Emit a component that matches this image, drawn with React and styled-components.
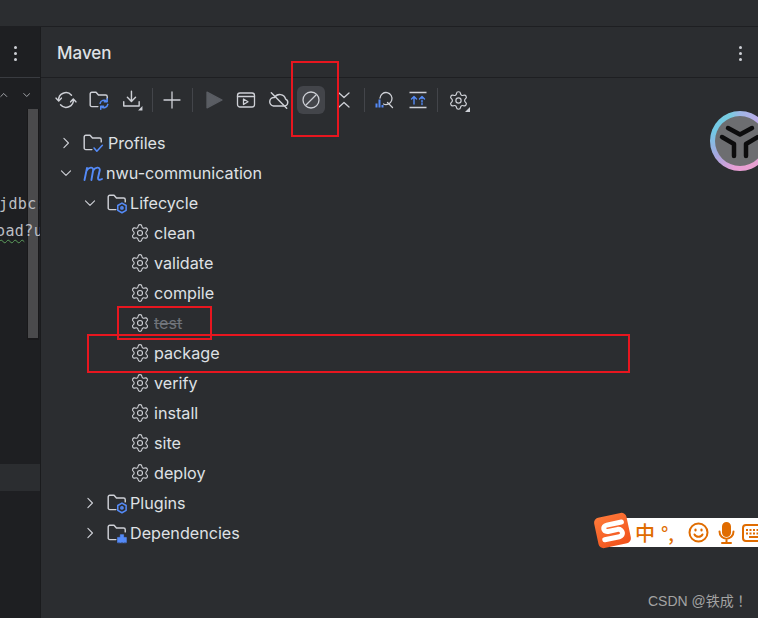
import React from "react";
import styled, { createGlobalStyle } from "styled-components";
import { Settings } from "lucide-react";

const Global = createGlobalStyle`
  html, body { margin: 0; padding: 0; background: #2b2d30; }
  #root { width: 758px; height: 618px; }
`;

const Page = styled.div`
  position: relative;
  width: 758px;
  height: 618px;
  overflow: hidden;
  display: flex;
  flex-direction: column;
  background: #2b2d30;
  font-family: Inter, "Noto Sans", sans-serif;
  color: #dfe1e5;
`;
const TitleBar = styled.div`
  height: 26px;
  flex: none;
  background: #2b2d30;
  border-bottom: 1px solid #1e1f22;
`;
const Body = styled.div`
  flex: 1;
  display: flex;
  min-height: 0;
`;
const Editor = styled.div`
  width: 40px;
  flex: none;
  display: flex;
  flex-direction: column;
  background: #1e1f22;
  border-right: 1px solid #1a1b1d;
  overflow: hidden;
`;
const EditorHeader = styled.div`
  height: 51px;
  flex: none;
  display: flex;
  align-items: center;
  padding: 2px 0 0 14px;
  box-sizing: border-box;
  border-bottom: 1px solid #393b40;
`;
const EditorMain = styled.div`
  position: relative;
  height: 386px;
  flex: none;
`;
const NavRow = styled.div`
  height: 33px;
  display: flex;
  align-items: center;
  justify-content: flex-end;
  padding-right: 10px;
  gap: 15px;
`;
const ScrollTrack = styled.div`
  position: absolute;
  top: 31px;
  left: 27px;
  width: 12px;
  height: 231px;
  background: #19191b;
`;
const ScrollThumb = styled.div`
  margin-left: 1px;
  width: 10px;
  height: 229px;
  background: #4a4a4c;
`;
const CodeLines = styled.div`
  position: absolute;
  inset: 32px 0 0 0;
  padding-top: 81px;
  font-family: "DejaVu Sans Mono", monospace;
  font-size: 15px;
  line-height: 27px;
  letter-spacing: 0.4px;
  color: #bcbec4;
  white-space: nowrap;
`;
const CodeLine = styled.div`
  margin-left: ${(p) => p.$shift}px;
`;
const Squiggle = styled.span`
  text-decoration: underline wavy #5c9e5c 1px;
  text-underline-offset: 3px;
`;
const Stripe = styled.div`
  height: 27px;
  flex: none;
  background: #2b2d30;
`;
const Panel = styled.div`
  flex: 1;
  display: flex;
  flex-direction: column;
  min-width: 0;
`;
const PanelHeader = styled.div`
  height: 51px;
  flex: none;
  display: flex;
  align-items: center;
  justify-content: space-between;
  padding: 2px 16px 0 16px;
  box-sizing: border-box;
  border-bottom: 1px solid #1e1f22;
`;
const PanelTitle = styled.div`
  font-size: 17px;
  font-weight: 500;
  color: #dfe1e5;
`;
const Dots = styled.div`
  display: flex;
  flex-direction: column;
  gap: 3px;
  & > i {
    display: block;
    width: 3px;
    height: 3px;
    border-radius: 50%;
    background: #ced0d6;
  }
`;
const Toolbar = styled.div`
  height: 44px;
  flex: none;
  display: flex;
  align-items: center;
  padding-left: 8.5px;
`;
const ToolSlot = styled.div`
  width: 33px;
  height: 28px;
  flex: none;
  box-sizing: border-box;
  padding-left: ${(p) => p.$nudge || 0}px;
  display: flex;
  align-items: center;
  justify-content: center;
`;
const ToolActive = styled.div`
  width: 28px;
  height: 28px;
  border-radius: 6px;
  background: #43454a;
  display: flex;
  align-items: center;
  justify-content: center;
`;
const ToolSep = styled.div`
  width: 7px;
  flex: none;
  display: flex;
  justify-content: center;
  &::before {
    content: "";
    width: 1px;
    height: 24px;
    background: #43454a;
  }
`;
const CornerGear = styled.span`
  position: relative;
  display: flex;
  & > svg:last-child {
    position: absolute;
    right: -1px;
    bottom: -1px;
  }
`;
const Tree = styled.div`
  padding-top: 6px;
  display: flex;
  flex-direction: column;
`;
const Row = styled.div`
  height: 30px;
  display: flex;
  align-items: center;
  padding-left: ${(p) => 13 + p.$level * 24}px;
`;
const Chevron = styled.div`
  width: 24px;
  flex: none;
  margin-right: 6px;
  display: flex;
  justify-content: center;
`;
const IconSlot = styled.div`
  width: ${(p) => (p.$wide ? 24 : 22)}px;
  flex: none;
  display: flex;
  align-items: center;
  & > svg {
    flex: none;
    margin-left: ${(p) => p.$pull || 0}px;
  }
`;
const Label = styled.span`
  font-size: 16.15px;
  color: ${(p) => (p.$off ? "#6f737a" : "#dfe1e5")};
  text-decoration: ${(p) => (p.$off ? "line-through" : "none")};
  white-space: nowrap;
`;
const Annotation = styled.div`
  position: absolute;
  left: ${(p) => p.$x}px;
  top: ${(p) => p.$y}px;
  width: ${(p) => p.$w}px;
  height: ${(p) => p.$h}px;
  box-sizing: border-box;
  border: 2px solid #e8161f;
  pointer-events: none;
`;
const Floating = styled.div`
  position: absolute;
  left: 710px;
  top: 111px;
  width: 60px;
  height: 60px;
  border-radius: 50%;
  background: conic-gradient(from 0deg, #9fb6e6, #c9a8e8 60deg, #e8a0d0 150deg, #e89fd6 190deg, #a5a8e0 240deg, #72c8e6 290deg, #78cce0 340deg, #9fb6e6);
  display: flex;
  align-items: center;
  justify-content: center;
`;
const FloatingInner = styled.div`
  width: 50px;
  height: 50px;
  border-radius: 50%;
  background: #6d6e71;
  display: flex;
  align-items: center;
  justify-content: center;
`;
const ImeBar = styled.div`
  position: absolute;
  left: 610px;
  top: 518px;
  width: 160px;
  height: 29px;
  background: #ffffff;
  display: flex;
  align-items: center;
  padding-left: 25px;
  box-sizing: border-box;
  color: #e06c00;
`;
const ImeChar = styled.span`
  font-family: "Noto Sans CJK SC", sans-serif;
  font-size: ${(p) => p.$size}px;
  font-weight: 500;
  line-height: 29px;
  width: ${(p) => p.$w}px;
  flex: none;
`;
const ImeGap = styled.span`
  width: ${(p) => p.$w}px;
  flex: none;
`;
const ImeLogo = styled.div`
  position: absolute;
  left: 596px;
  top: 515px;
  width: 33px;
  height: 31px;
  border-radius: 5px;
  transform: rotate(-12deg);
  background: linear-gradient(160deg, #ff7a3a, #f0501a);
  color: #fff;
  display: flex;
  align-items: center;
  justify-content: center;
`;
const Watermark = styled.div`
  position: absolute;
  left: 648px;
  top: 592px;
  font-family: "Liberation Sans", "Noto Sans CJK TC", sans-serif;
  font-size: 14px;
  line-height: 18px;
  color: #a3a3a3;
  white-space: nowrap;
`;

const G = "#ced0d6";
const B = "#548af7";

const Ico = ({ s = 20, children, ...rest }) => (
  <svg width={s} height={s} viewBox="0 0 20 20" fill="none" stroke={G} strokeWidth="1.3" strokeLinecap="round" strokeLinejoin="round" {...rest}>
    {children}
  </svg>
);

const Corner = () => <path d="M19.5 19.5H15.5L19.5 15.5Z" fill={G} stroke="none" />;

const FolderPath = () => (
  <path d="M9 16H3.5A1.5 1.5 0 0 1 2 14.5V4.5A1.5 1.5 0 0 1 3.5 3H7.3L9.5 5.5H16A1.5 1.5 0 0 1 17.5 7V9" />
);

const SyncIco = () => (
  <Ico s={22}>
    <path d="M3.3 10.5A6.7 6.7 0 0 1 15 5.6" />
    <path d="M16.7 9.5A6.7 6.7 0 0 1 5 14.4" />
    <path d="M1 8.3L3.4 10.8L5.8 8.3" />
    <path d="M14.2 11.7L16.6 9.2L19 11.7" />
  </Ico>
);
const FolderSyncIco = () => (
  <Ico s={22}>
    <FolderPath />
    <g stroke={B} strokeWidth="1.4">
      <path d="M11 13A3.6 3.6 0 0 1 17 11.2" />
      <path d="M18 14A3.6 3.6 0 0 1 12 16" />
      <path d="M17.4 8.8V11.5H14.8" />
      <path d="M11.6 18.3V15.6H14.2" />
    </g>
  </Ico>
);
const DownloadIco = () => (
  <Ico s={22}>
    <path d="M9.5 2V11M5.8 7.6L9.5 11.3L13.2 7.6" />
    <path d="M2.5 11.5V15.5H16.5V11.5" />
    <Corner />
  </Ico>
);
const PlusIco = () => (
  <Ico s={20}>
    <path d="M10 2V18M2 10H18" />
  </Ico>
);
const PlayIco = () => (
  <Ico s={20}>
    <path d="M3 2.2L18 10L3 17.8Z" fill="#5a5d63" stroke="#5a5d63" />
  </Ico>
);
const RunWinIco = () => (
  <Ico s={20}>
    <rect x="1.5" y="3" width="17" height="14" rx="2.5" />
    <path d="M1.5 6.5H18.5" />
    <path d="M7.5 9V14.5L12 11.75Z" />
  </Ico>
);
const CloudOffIco = () => (
  <Ico s={22}>
    <path d="M5 15.5H15A3.3 3.3 0 0 0 16 9.2A5.5 5.5 0 0 0 6 7.7A3.9 3.9 0 0 0 5 15.5Z" />
    <path d="M3 3.5L17 17.5" />
  </Ico>
);
const SkipIco = () => (
  <Ico s={20}>
    <circle cx="10" cy="10" r="8" />
    <path d="M5 15L15 5" />
  </Ico>
);
const CollapseIco = () => (
  <Ico s={20}>
    <path d="M5 3L10 7.6L15 3" />
    <path d="M5 17L10 12.4L15 17" />
  </Ico>
);
const AnalyzeIco = () => (
  <Ico s={20}>
    <path d="M6 8A6 6 0 1 1 9.5 14" />
    <path d="M13.5 12.5L18.5 17.5" />
    <path d="M2.5 17.5V13.5M5.5 17.5V9.5M8.5 17.5V15" stroke={B} strokeWidth="2" strokeLinecap="butt" />
  </Ico>
);
const AlignTopIco = () => (
  <Ico s={20}>
    <path d="M1.5 2.5H18.5M1.5 17.5H18.5" strokeWidth="1.6" strokeLinecap="butt" />
    <g stroke={B} strokeWidth="1.4">
      <path d="M6 14V6.5M3.5 9L6 6.5L8.5 9" />
      <path d="M14 7V8.5M14 10.5V12M14 13.5V14.5M11.5 9L14 6.5L16.5 9" />
    </g>
  </Ico>
);
const GearCornerIco = () => (
  <CornerGear>
    <Settings size={21} color={G} strokeWidth={1.35} />
    <svg width="5" height="5" viewBox="0 0 5 5">
      <path d="M5 5H0L5 0Z" fill={G} />
    </svg>
  </CornerGear>
);

const ChevR = () => (
  <Ico s={14} strokeWidth="1.6">
    <path d="M7 3.5L13.5 10L7 16.5" />
  </Ico>
);
const ChevD = () => (
  <Ico s={14} strokeWidth="1.6">
    <path d="M3.5 7L10 13.5L16.5 7" />
  </Ico>
);
const BlueGear = ({ cx, cy }) => (
  <g stroke={B} strokeWidth="1.4">
    <path d={`M${cx} ${cy - 4.4}L${cx + 3.8} ${cy - 2.2}V${cy + 2.2}L${cx} ${cy + 4.4}L${cx - 3.8} ${cy + 2.2}V${cy - 2.2}Z`} />
    <circle cx={cx} cy={cy} r="1" />
  </g>
);
const ProfilesIco = () => (
  <Ico s={22}>
    <FolderPath />
    <path d="M11 14.5L13.5 17.5L18.5 12" stroke={B} strokeWidth="1.4" />
  </Ico>
);
const LifecycleIco = () => (
  <Ico s={22}>
    <FolderPath />
    <BlueGear cx={14.5} cy={14.5} />
  </Ico>
);
const DepsIco = () => (
  <Ico s={22}>
    <FolderPath />
    <path d="M10.5 18.5V14H13V18.5ZM13 18.5V11.5H16V18.5ZM16 18.5V14H18.5V18.5Z" fill={B} stroke={B} strokeWidth="0.6" />
  </Ico>
);
const MavenIco = () => (
  <svg width="21" height="18" viewBox="0 0 21 18" fill="none" stroke={B} strokeWidth="1.9" strokeLinecap="round" strokeLinejoin="round">
    <path d="M1.5 16L4 4M3.7 6.5C5.5 3 10.5 2.5 10.2 6L8.4 16M10.2 6.5C12 3 17 2.5 16.8 6L15 14C14.7 16 16.5 16.2 19 15" />
  </svg>
);
const Gear = () => <Settings size={20} color={G} strokeWidth={1.35} />;

const NavUp = () => (
  <Ico s={10} strokeWidth="2">
    <path d="M2 14L10 6L18 14" />
  </Ico>
);
const NavDown = () => (
  <Ico s={10} strokeWidth="2">
    <path d="M2 6L10 14L18 6" />
  </Ico>
);

const TrioMark = () => (
  <svg width="44" height="44" viewBox="0 0 44 44" fill="none" stroke="#0c0c0d" strokeWidth="4.5" strokeLinecap="round" strokeLinejoin="round">
    <path d="M10 9L22 15.5L34 9" />
    <path d="M4 18L16 25V37" />
    <path d="M40 18L28 25V37" />
  </svg>
);

const Smile = () => (
  <svg width="21" height="21" viewBox="0 0 21 21" fill="none" stroke="#e06c00" strokeWidth="2" strokeLinecap="round">
    <circle cx="10.5" cy="10.5" r="9" />
    <path d="M6.5 12.5C8 15.5 13 15.5 14.5 12.5" />
    <path d="M7.5 7.5V8.5M13.5 7.5V8.5" strokeWidth="2.2" />
  </svg>
);
const Mic = () => (
  <svg width="17" height="22" viewBox="0 0 17 22" fill="none" stroke="#e06c00" strokeWidth="2" strokeLinecap="round">
    <rect x="5" y="1" width="7" height="13" rx="3.5" fill="#e06c00" />
    <path d="M1.5 9.5C1.5 19 15.5 19 15.5 9.5M8.5 17V20.5M4 21H13" />
  </svg>
);
const Keys = () => (
  <svg width="24" height="18" viewBox="0 0 24 18" fill="none" stroke="#e06c00" strokeWidth="2">
    <rect x="1" y="1" width="22" height="16" rx="3" />
    <path d="M4 6H20M4 9.5H20" strokeDasharray="2 1.5" strokeWidth="2" />
    <path d="M7 13H17" />
  </svg>
);

const SLogo = () => (
  <svg width="28" height="22" viewBox="0 0 28 22" fill="none" stroke="#fff" strokeWidth="5" strokeLinecap="round" strokeLinejoin="round">
    <path d="M24 4H9C4 4 4 10 9 10.5H19C24 11 24 18 19 18H4" />
  </svg>
);

const tasks = ["clean", "validate", "compile", "test", "package", "verify", "install", "site", "deploy"];

const TaskRow = ({ name }) => (
  <Row $level={2}>
    <Chevron />
    <IconSlot $pull={-2}>
      <Gear />
    </IconSlot>
    <Label $off={name === "test"}>{name}</Label>
  </Row>
);

export default function App() {
  return (
    <Page>
      <Global />
      <TitleBar />
      <Body>
        <Editor>
          <EditorHeader>
            <Dots>
              <i />
              <i />
              <i />
            </Dots>
          </EditorHeader>
          <EditorMain>
            <NavRow>
              <NavUp />
              <NavDown />
            </NavRow>
            <ScrollTrack>
              <ScrollThumb />
            </ScrollTrack>
            <CodeLines>
              <CodeLine $shift={-1}>jdbc:</CodeLine>
              <CodeLine $shift={-4}>
                <Squiggle>oad</Squiggle>?u
              </CodeLine>
            </CodeLines>
          </EditorMain>
          <Stripe />
        </Editor>
        <Panel>
          <PanelHeader>
            <PanelTitle>Maven</PanelTitle>
            <Dots>
              <i />
              <i />
              <i />
            </Dots>
          </PanelHeader>
          <Toolbar>
            <ToolSlot><SyncIco /></ToolSlot>
            <ToolSlot><FolderSyncIco /></ToolSlot>
            <ToolSlot><DownloadIco /></ToolSlot>
            <ToolSep />
            <ToolSlot><PlusIco /></ToolSlot>
            <ToolSep />
            <ToolSlot $nudge={4}><PlayIco /></ToolSlot>
            <ToolSlot $nudge={2}><RunWinIco /></ToolSlot>
            <ToolSlot $nudge={2}><CloudOffIco /></ToolSlot>
            <ToolSlot><ToolActive><SkipIco /></ToolActive></ToolSlot>
            <ToolSlot><CollapseIco /></ToolSlot>
            <ToolSep />
            <ToolSlot><AnalyzeIco /></ToolSlot>
            <ToolSlot $nudge={2}><AlignTopIco /></ToolSlot>
            <ToolSep />
            <ToolSlot $nudge={3}><GearCornerIco /></ToolSlot>
          </Toolbar>
          <Tree>
            <Row $level={0}>
              <Chevron><ChevR /></Chevron>
              <IconSlot $wide $pull={-2}><ProfilesIco /></IconSlot>
              <Label>Profiles</Label>
            </Row>
            <Row $level={0}>
              <Chevron><ChevD /></Chevron>
              <IconSlot $pull={-1}><MavenIco /></IconSlot>
              <Label>nwu-communication</Label>
            </Row>
            <Row $level={1}>
              <Chevron><ChevD /></Chevron>
              <IconSlot $pull={-2}><LifecycleIco /></IconSlot>
              <Label>Lifecycle</Label>
            </Row>
            {tasks.map((t) => (
              <TaskRow key={t} name={t} />
            ))}
            <Row $level={1}>
              <Chevron><ChevR /></Chevron>
              <IconSlot $pull={-2}><LifecycleIco /></IconSlot>
              <Label>Plugins</Label>
            </Row>
            <Row $level={1}>
              <Chevron><ChevR /></Chevron>
              <IconSlot $pull={-2}><DepsIco /></IconSlot>
              <Label>Dependencies</Label>
            </Row>
          </Tree>
        </Panel>
      </Body>
      <Annotation $x={291} $y={61} $w={48} $h={76} />
      <Annotation $x={117} $y={306} $w={95} $h={34} />
      <Annotation $x={87} $y={334} $w={543} $h={39} />
      <Floating>
        <FloatingInner>
          <TrioMark />
        </FloatingInner>
      </Floating>
      <ImeBar>
        <ImeChar $size={20} $w={26}>中</ImeChar>
        <ImeChar $size={19} $w={27}>°,</ImeChar>
        <Smile />
        <ImeGap $w={9} />
        <Mic />
        <ImeGap $w={7} />
        <Keys />
      </ImeBar>
      <ImeLogo>
        <SLogo />
      </ImeLogo>
      <Watermark>CSDN @铁成！</Watermark>
    </Page>
  );
}
